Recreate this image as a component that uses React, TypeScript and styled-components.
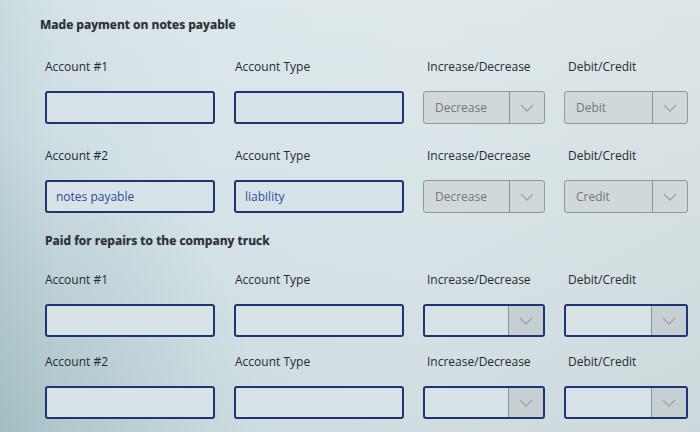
import React from "react";
import styled, { createGlobalStyle } from "styled-components";

const Global = createGlobalStyle`
  html, body { margin: 0; padding: 0; }
  body {
    width: 700px;
    height: 432px;
    overflow: hidden;
    font-family: "Open Sans", "Liberation Sans", sans-serif;
  }
`;

const Page = styled.div`
  width: 700px;
  height: 432px;
  box-sizing: border-box;
  padding: 17px 0 0 45px;
  display: flex;
  flex-direction: column;
  gap: 20px;
  background:
    radial-gradient(ellipse 260px 300px at 0% 100%, rgba(120, 160, 165, 0.35), rgba(120, 160, 165, 0) 100%),
    linear-gradient(180deg, rgba(255, 255, 255, 0.16) 0%, rgba(255, 255, 255, 0) 45%, rgba(70, 110, 118, 0.06) 100%),
    linear-gradient(90deg, #c0d4d9 0%, #cddde2 8%, #d6e3e8 30%, #d9e4e8 60%, #d6e0e3 100%);
`;

const Section = styled.section`
  display: flex;
  flex-direction: column;
`;

const Title = styled.h2<{ $indent: number; $after: number }>`
  margin: 0 0 ${(p) => p.$after}px ${(p) => p.$indent}px;
  font-size: 12px;
  line-height: 16px;
  font-weight: 700;
  color: #2b2f34;
  text-shadow: 0 0 1px rgba(40, 45, 50, 0.35);
`;

const Rows = styled.div<{ $rowGap: number }>`
  display: flex;
  flex-direction: column;
  gap: ${(p) => p.$rowGap}px;
`;

const Row = styled.div`
  display: grid;
  grid-template-columns: 170px 170px 122px 124px;
  column-gap: 19px;
`;

const Field = styled.div`
  display: flex;
  flex-direction: column;
  gap: 16px;
`;

const Label = styled.span<{ $indent: number }>`
  padding-left: ${(p) => p.$indent}px;
  font-size: 12px;
  line-height: 16px;
  color: #262b30;
`;

const TextBox = styled.div`
  height: 33px;
  box-sizing: border-box;
  border: 2px solid #1c3577;
  border-radius: 3px;
  background: #d8e3e7;
  display: flex;
  align-items: center;
  padding-left: 9px;
  font-size: 12px;
  color: #2d4d9c;
`;

const SelectBox = styled.div<{ $filled: boolean }>`
  height: 33px;
  box-sizing: border-box;
  border: ${(p) => (p.$filled ? "1.5px solid #8e979b" : "2px solid #1c3577")};
  border-radius: 3px;
  background: ${(p) => (p.$filled ? "#d0d8db" : "#d6e2e6")};
  display: flex;
  align-items: stretch;
  overflow: hidden;
`;

const SelectValue = styled.div`
  flex: 1;
  display: flex;
  align-items: center;
  padding-left: 11px;
  font-size: 12px;
  color: #72797e;
`;

const Chevron = styled.div<{ $filled: boolean }>`
  width: 34px;
  flex: none;
  display: flex;
  align-items: center;
  justify-content: center;
  border-left: 1.5px solid #8a9397;
  background: ${(p) => (p.$filled ? "transparent" : "#c6cfd2")};
`;

const ChevronIcon = () => (
  <svg width="14" height="8" viewBox="0 0 14 8">
    <path d="M1 1 L7 7 L13 1" fill="none" stroke="#9ba4a8" strokeWidth="1.3" />
  </svg>
);

type Sel = { value?: string };
type RowData = {
  account: string;
  type: string;
  inc: Sel;
  dc: Sel;
  label: string;
};

const Select = ({ value }: Sel) => {
  const filled = !!value;
  return (
    <SelectBox $filled={filled}>
      <SelectValue>{value ?? ""}</SelectValue>
      <Chevron $filled={filled}>
        <ChevronIcon />
      </Chevron>
    </SelectBox>
  );
};

const EntryRow = ({ r }: { r: RowData }) => (
  <Row>
    <Field>
      <Label $indent={0}>{r.label}</Label>
      <TextBox>{r.account}</TextBox>
    </Field>
    <Field>
      <Label $indent={1}>Account Type</Label>
      <TextBox>{r.type}</TextBox>
    </Field>
    <Field>
      <Label $indent={4}>Increase/Decrease</Label>
      <Select value={r.inc.value} />
    </Field>
    <Field>
      <Label $indent={4}>Debit/Credit</Label>
      <Select value={r.dc.value} />
    </Field>
  </Row>
);

const sections: { title: string; indent: number; after: number; rowGap: number; rows: RowData[] }[] = [
  {
    title: "Made payment on notes payable",
    indent: -5,
    after: 26,
    rowGap: 24,
    rows: [
      { label: "Account #1", account: "", type: "", inc: { value: "Decrease" }, dc: { value: "Debit" } },
      { label: "Account #2", account: "notes payable", type: "liability", inc: { value: "Decrease" }, dc: { value: "Credit" } },
    ],
  },
  {
    title: "Paid for repairs to the company truck",
    indent: 0,
    after: 23,
    rowGap: 17,
    rows: [
      { label: "Account #1", account: "", type: "", inc: {}, dc: {} },
      { label: "Account #2", account: "", type: "", inc: {}, dc: {} },
    ],
  },
];

export default function App() {
  return (
    <>
      <Global />
      <Page>
        {sections.map((s) => (
          <Section key={s.title}>
            <Title $indent={s.indent} $after={s.after}>
              {s.title}
            </Title>
            <Rows $rowGap={s.rowGap}>
              {s.rows.map((r) => (
                <EntryRow key={r.label} r={r} />
              ))}
            </Rows>
          </Section>
        ))}
      </Page>
    </>
  );
}
